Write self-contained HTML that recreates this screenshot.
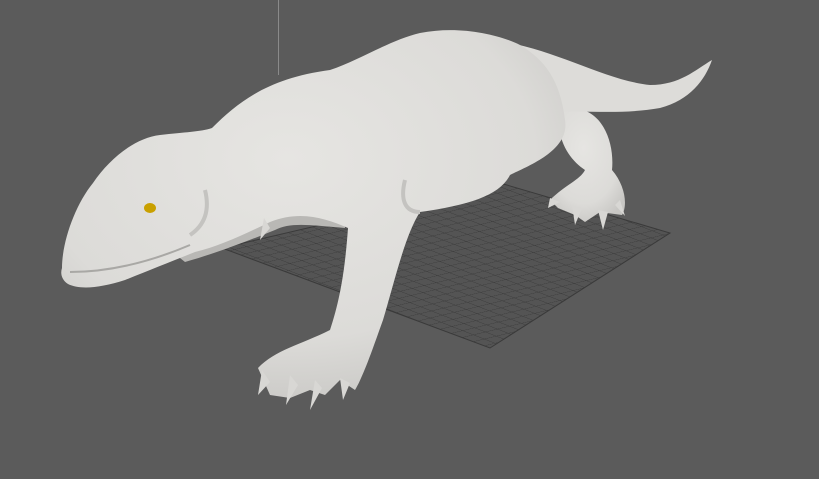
<!DOCTYPE html>
<html><head><meta charset="utf-8"><style>html,body{margin:0;padding:0;background:#5b5b5b;overflow:hidden}svg{display:block}</style></head>
<body>
<svg width="819" height="479" viewBox="0 0 819 479" xmlns="http://www.w3.org/2000/svg">
<defs>
<pattern id="g" width="12" height="12" patternUnits="userSpaceOnUse" patternTransform="matrix(1,-0.24,0.9,0.35,0,0)">
<path d="M0 0H12M0 0V12" stroke="#333" stroke-width="1.3" fill="none"/>
</pattern>
<radialGradient id="sh" cx="0.45" cy="0.35" r="0.7">
<stop offset="0" stop-color="#e6e5e2"/><stop offset="0.7" stop-color="#dcdbd8"/><stop offset="1" stop-color="#c8c7c4"/>
</radialGradient>
</defs>
<rect width="819" height="479" fill="#5b5b5b"/>
<line x1="278.5" y1="0" x2="278.5" y2="75" stroke="#8a8a8a" stroke-width="1"/>
<polygon points="222,248 500,183 670,233 490,348" fill="#545454"/>
<polygon points="222,248 500,183 670,233 490,348" fill="url(#g)" opacity="0.8"/>
<polygon points="222,248 500,183 670,233 490,348" fill="none" stroke="#3a3a3a"/>
<!-- back leg -->
<path d="M560 110 C600 100 615 140 612 170 C625 185 628 205 622 215 L600 212 L585 222 L575 215 L558 208 L550 200 C565 185 580 180 585 170 C570 160 555 140 560 110Z" fill="url(#sh)"/>
<!-- tail -->
<path d="M480 40 C540 40 600 80 650 85 C680 85 695 70 712 60 C705 80 690 100 660 108 C620 115 585 110 560 112 Z" fill="#dddcd9"/>
<!-- neck underside shadow -->
<path d="M170 250 C210 235 260 215 300 205 C330 200 345 215 345 228 C310 225 290 222 275 230 C250 240 220 252 185 262Z" fill="#b9b8b5"/>
<!-- body -->
<path d="M62 268 C62 242 75 205 93 183 C110 158 135 138 160 135 C185 132 200 132 212 128 C240 100 270 78 330 70 C360 60 390 40 420 33 C460 25 500 35 520 45 C545 60 560 80 565 120 C570 150 530 165 510 175 C500 195 470 205 420 212 C405 235 395 280 383 320 C374 345 364 375 355 390 L340 380 L325 395 L310 390 L290 398 L270 395 L258 368 C275 350 300 345 330 330 C340 300 345 270 348 228 C325 218 300 210 270 222 C245 234 220 246 195 252 C170 262 150 270 125 280 C100 288 80 290 68 284 C62 280 60 274 62 268Z" fill="url(#sh)"/>
<!-- claws -->
<path d="M262 370 L258 395 L270 382Z M290 375 L286 405 L298 385Z M315 380 L310 410 L322 388Z M340 378 L343 400 L350 383Z M264 218 L260 240 L270 228Z M550 198 L548 208 L560 202Z M572 205 L575 225 L582 208Z M598 210 L603 230 L608 212Z M615 205 L625 216 L620 200Z" fill="#d8d7d4"/>
<!-- shading lines -->
<path d="M70 272 C110 272 150 262 190 245" stroke="#a9a8a5" stroke-width="2" fill="none"/>
<path d="M205 190 C210 210 205 225 190 235" stroke="#c4c3c0" stroke-width="4" fill="none"/>
<path d="M405 180 C400 200 405 212 420 212" stroke="#c4c3c0" stroke-width="4" fill="none"/>
<ellipse cx="150" cy="208" rx="6" ry="5" fill="#c9a000"/>
</svg>
</body></html>
